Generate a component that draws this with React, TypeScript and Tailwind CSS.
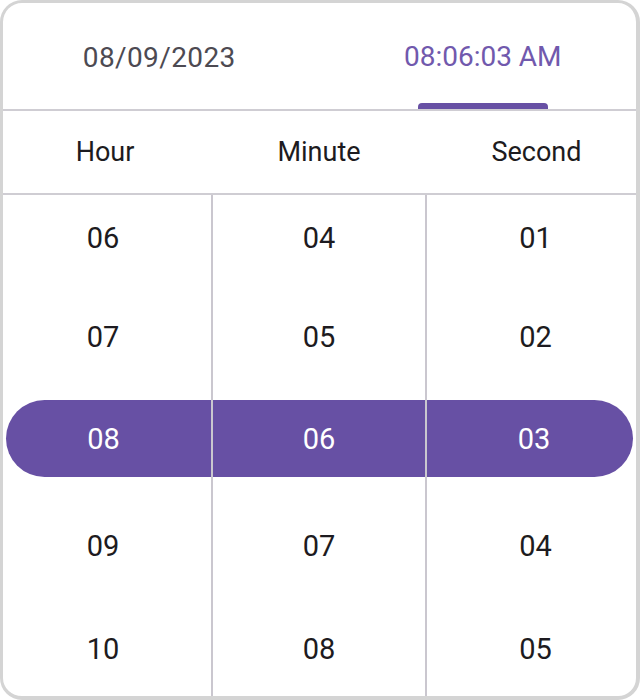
import React from "react";

const cols = [
  { label: "Hour", values: ["06", "07", "08", "09", "10"] },
  { label: "Minute", values: ["04", "05", "06", "07", "08"] },
  { label: "Second", values: ["01", "02", "03", "04", "05"] },
];

const rowH = ["h-[92px] pb-[4px]", "h-[102px]", "h-[102px]", "h-[112px]", "h-[93px]"];

export default function App() {
  return (
    <div className="w-[640px] h-[700px] bg-white" style={{ fontFamily: "Roboto, 'Noto Sans', sans-serif" }}>
      <div className="w-full h-full border-t-[3px] border-l-[3px] border-r-4 border-b-4 border-[#d4d4d4] rounded-[22px] overflow-hidden flex flex-col">
        {/* Tabs */}
        <div className="h-[108px] flex border-b-2 border-[#cfcdd3] shrink-0">
          <div className="flex-1 flex items-center justify-center pr-[8px] pt-[4px]">
            <span className="text-[28px] text-[#4d4a52] tracking-[0.4px]">08/09/2023</span>
          </div>
          <div className="flex-1 flex flex-col items-center justify-end">
            <div className="flex-1 flex items-center pt-[7px] pl-[6px]">
              <span className="text-[28px] text-[#7159ad]">08:06:03 AM</span>
            </div>
            <div className="w-[130px] h-[6px] bg-[#6750a4] rounded-t-[4px] ml-[6px]" />
          </div>
        </div>
        {/* Column headers */}
        <div className="h-[84px] flex border-b-2 border-[#cfcdd3] shrink-0">
          {cols.map((c, i) => (
            <div
              key={c.label}
              className={
                i === 0
                  ? "w-[208px] flex items-center justify-center pr-[4px]"
                  : i === 1
                  ? "w-[216px] flex items-center justify-center"
                  : "flex-1 flex items-center justify-center pl-[10px]"
              }
            >
              <span className="text-[27px] text-[#1d1b20]">{c.label}</span>
            </div>
          ))}
        </div>
        {/* Wheels */}
        <div className="flex-1 flex">
          {cols.map((c, ci) => (
            <div
              key={c.label}
              className={
                ci === 1
                  ? "w-[216px] flex flex-col border-l-2 border-r-2 border-[#cac7cf]"
                  : ci === 0
                  ? "w-[208px] flex flex-col"
                  : "flex-1 flex flex-col"
              }
            >
              {c.values.map((v, ri) => (
                <div
                  key={v + ri}
                  className={
                    ri === 2
                      ? `${rowH[ri]} flex items-start justify-center pt-[11px]`
                      : `${rowH[ri]} flex items-center justify-center`
                  }
                >
                  {ri === 2 ? (
                    <div
                      className={
                        ci === 0
                          ? "h-[77px] w-full ml-[3px] bg-[#6750a4] rounded-l-full flex items-center justify-center pt-[3px] pr-[10px]"
                          : ci === 2
                          ? "h-[77px] w-full mr-[3px] bg-[#6750a4] rounded-r-full flex items-center justify-center pt-[3px] pl-[8px]"
                          : "h-[77px] w-full bg-[#6750a4] flex items-center justify-center pt-[3px]"
                      }
                    >
                      <span className="text-[29px] text-white">{v}</span>
                    </div>
                  ) : (
                    <span
                      className={
                        ci === 2
                          ? "text-[29px] text-[#1d1b20] pl-[8px]"
                          : ci === 0
                          ? "text-[29px] text-[#1d1b20] pr-[8px]"
                          : "text-[29px] text-[#1d1b20]"
                      }
                    >
                      {v}
                    </span>
                  )}
                </div>
              ))}
            </div>
          ))}
        </div>
      </div>
    </div>
  );
}
